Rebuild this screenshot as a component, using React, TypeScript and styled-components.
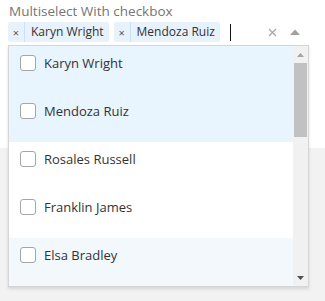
import React from "react";
import styled, { createGlobalStyle } from "styled-components";

const Global = createGlobalStyle`
  html, body { margin: 0; padding: 0; background: #f2f2f2; }
  body { font-family: "Open Sans", "Liberation Sans", sans-serif; }
  * { box-sizing: border-box; }
`;

const Page = styled.div`
  display: flex;
  flex-direction: column;
  min-height: 301px;
`;

const Panel = styled.div`
  background: #ffffff;
  height: 148px;
  padding: 2px 8px 0 8px;
`;

const Label = styled.div`
  font-size: 13.5px;
  line-height: 18px;
  color: #757575;
  margin-left: 1px;
`;

const Field = styled.div`
  position: relative;
  width: 301px;
  margin-top: 2px;
`;

const Control = styled.div`
  display: flex;
  align-items: center;
  height: 20px;
  gap: 5px;
`;

const Tag = styled.div`
  display: flex;
  align-items: center;
  height: 20px;
  background: #e7f2fd;
  border-radius: 2px;
  color: #333;
  font-size: 12px;
`;

const TagClose = styled.span`
  width: 17px;
  height: 20px;
  display: flex;
  align-items: center;
  justify-content: center;
  font-size: 11px;
  color: #555;
  border-right: 1px solid #c9e1f8;
`;

const TagText = styled.span`
  padding: 0 5px 0 6px;
  line-height: 20px;
`;

const Caret = styled.span`
  width: 1px;
  height: 17px;
  background: #111;
  margin-left: 5px;
`;

const Actions = styled.div`
  margin-left: auto;
  display: flex;
  align-items: center;
  gap: 13px;
  padding-right: 9px;
`;

const Dropdown = styled.div`
  position: absolute;
  top: 23px;
  left: 0;
  width: 301px;
  height: 242px;
  display: flex;
  background: #fff;
  border: 1px solid #d6d6d6;
  box-shadow: 0 2px 3px rgba(0, 0, 0, 0.12);
  z-index: 10;
`;

const List = styled.ul`
  list-style: none;
  margin: 0;
  padding: 0;
  flex: 1;
  height: 240px;
  overflow: hidden;
`;

const Item = styled.li<{ $state: "selected" | "hover" | "none" }>`
  height: 48px;
  display: flex;
  align-items: center;
  padding: 0 0 14px 11px;
  background: ${(p) =>
    p.$state === "selected" ? "#e8f4fe" : p.$state === "hover" ? "#f3f8fd" : "#ffffff"};
`;

const Box = styled.span`
  width: 16px;
  height: 16px;
  border: 1px solid #a6a6a6;
  border-radius: 3px;
  background: #fff;
  flex: none;
`;

const ItemText = styled.span`
  margin-left: 8px;
  font-size: 13px;
  line-height: 17px;
  color: #333;
`;

const Scrollbar = styled.div`
  width: 15px;
  height: 240px;
  background: #f1f1f1;
  display: flex;
  flex-direction: column;
  align-items: center;
`;

const Arrow = styled.div`
  width: 15px;
  height: 17px;
  display: flex;
  align-items: center;
  justify-content: center;
  flex: none;
`;

const Track = styled.div`
  flex: 1;
  width: 15px;
  display: flex;
  justify-content: center;
`;

const Thumb = styled.div`
  width: 13px;
  height: 74px;
  background: #c1c1c1;
`;

const names = [
  "Karyn Wright",
  "Mendoza Ruiz",
  "Rosales Russell",
  "Franklin James",
  "Elsa Bradley",
];

const selected = ["Karyn Wright", "Mendoza Ruiz"];

export default function App() {
  return (
    <>
      <Global />
      <Page>
        <Panel>
          <Label>Multiselect With checkbox</Label>
          <Field>
            <Control>
              {selected.map((n) => (
                <Tag key={n}>
                  <TagClose>×</TagClose>
                  <TagText>{n}</TagText>
                </Tag>
              ))}
              <Caret />
              <Actions>
                <svg width="9" height="9" viewBox="0 0 9 9">
                  <path d="M1 1L8 8M8 1L1 8" stroke="#a8a8a8" strokeWidth="1.3" />
                </svg>
                <svg width="10" height="6" viewBox="0 0 10 6">
                  <path d="M0 6L5 0.5L10 6Z" fill="#a0a0a0" />
                </svg>
              </Actions>
            </Control>
            <Dropdown>
              <List>
                {names.map((n, i) => (
                  <Item
                    key={n}
                    $state={i < 2 ? "selected" : i === 4 ? "hover" : "none"}
                  >
                    <Box />
                    <ItemText>{n}</ItemText>
                  </Item>
                ))}
              </List>
              <Scrollbar>
                <Arrow>
                  <svg width="7" height="4" viewBox="0 0 7 4">
                    <path d="M0 4L3.5 0L7 4Z" fill="#a3a3a3" />
                  </svg>
                </Arrow>
                <Track>
                  <Thumb />
                </Track>
                <Arrow>
                  <svg width="7" height="4" viewBox="0 0 7 4">
                    <path d="M0 0L3.5 4L7 0Z" fill="#505050" />
                  </svg>
                </Arrow>
              </Scrollbar>
            </Dropdown>
          </Field>
        </Panel>
      </Page>
    </>
  );
}
